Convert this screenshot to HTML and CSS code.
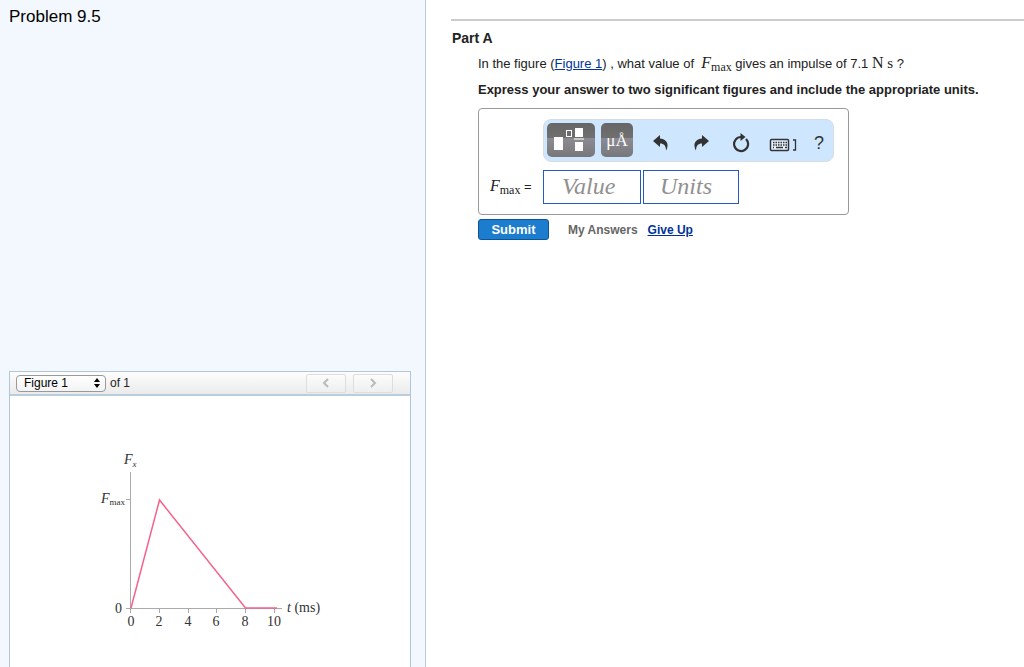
FILE: index.html
```html
<!DOCTYPE html>
<html lang="en">
<head>
	<meta charset="utf-8">
	<meta name="viewport" content="width=device-width, initial-scale=1.0">
	<title>Problem 9.5</title>
	<link rel="stylesheet" href="styles.css">
</head>
<body>
	<div class="page">
		<aside class="left">
			<h1 class="title">Problem 9.5</h1>

			<section class="figure">
				<div class="figbar">
					<span class="pick">
						<select id="fig" aria-label="Figure">
							<option>Figure 1</option>
						</select>
						<svg class="arrows" width="6" height="10" viewBox="0 0 6 10"><path d="M3 0L6 4H0zM3 10L0 6H6z"/></svg>
					</span>
					<label for="fig">of 1</label>
					<div class="pager">
						<button type="button" aria-label="Previous figure"><svg width="8" height="10" viewBox="0 0 8 10"><path d="M6 1L2 5L6 9"/></svg></button>
						<button type="button" aria-label="Next figure"><svg width="8" height="10" viewBox="0 0 8 10"><path d="M2 1L6 5L2 9"/></svg></button>
					</div>
				</div>
				<div class="figbody">
					<svg class="chart" width="250" height="200" viewBox="0 0 250 200">
						<!-- axes and ticks -->
						<path class="axis" d="M40.5 26V163M36 162.5H192M36 53.5H41M40.5 162V167M69.5 162V167M98.5 162V167M126.5 162V167M155.5 162V167M184.5 162V167"/>
						<path class="force" d="M41 162L69.500 54L155.500 162H187"/>
						<text x="34" y="18"><tspan class="it">F</tspan><tspan class="it small" dy="3">x</tspan></text>
						<text x="11" y="57"><tspan class="it">F</tspan><tspan class="small" dy="2">max</tspan></text>
						<text x="25" y="167">0</text>
						<text class="mid" x="41" y="180">0</text>
						<text class="mid" x="69" y="180">2</text>
						<text class="mid" x="98" y="180">4</text>
						<text class="mid" x="126" y="180">6</text>
						<text class="mid" x="155" y="180">8</text>
						<text class="mid" x="184" y="180">10</text>
						<text x="197" y="166"><tspan class="it">t</tspan> (ms)</text>
					</svg>
				</div>
			</section>
		</aside>

		<main class="right">
			<h2>Part A</h2>
			<div class="part">
				<p>In the figure (<a href="#fig">Figure 1</a>) , what value of &nbsp;<span class="math"><i>F</i><sub>max</sub></span> gives an impulse of 7.1 <span class="math">N<small>&nbsp;s</small></span> ?</p>
				<p class="bold">Express your answer to two significant figures and include the appropriate units.</p>

				<form onsubmit="event.preventDefault()" autocomplete="off">
					<div class="answer">
						<div class="toolbar">
							<button type="button" class="tile wide" aria-label="Templates">
								<svg width="48" height="34" viewBox="0 0 48 34">
									<rect x="7" y="14" width="9" height="13" fill="#fff"/>
									<rect x="19.500" y="7.500" width="5" height="6" fill="none" stroke="#fff"/>
									<rect x="28" y="5" width="8" height="9" fill="#fff"/>
									<rect x="27" y="15" width="10" height="2" fill="#c8c8cc"/>
									<rect x="28" y="19" width="8" height="9" fill="#fff"/>
								</svg>
							</button>
							<button type="button" class="tile">μÅ</button>
							<div class="tools">
								<button type="button" aria-label="Undo"><svg width="16" height="18" viewBox="0 0 16 18"><path d="M0 7L7 1V4.500C12 5 15 8 14.500 12C14.300 13.500 14 15 13 16.500C13 12 11 9.500 7 9.500V13Z"/></svg></button>
								<button type="button" aria-label="Redo"><svg width="16" height="18" viewBox="0 0 16 18"><path d="M16 7L9 1V4.500C4 5 1 8 1.500 12C1.700 13.500 2 15 3 16.500C3 12 5 9.500 9 9.500V13Z"/></svg></button>
								<button type="button" aria-label="Reset"><svg width="18" height="20" viewBox="0 0 18 20"><path d="M14 6A7 7 0 1 1 9 4" fill="none" stroke="#333" stroke-width="2.200"/><path d="M8.500 0L13.500 4L8.500 8Z"/></svg></button>
								<button type="button" class="keys" aria-label="Keyboard shortcuts"><svg width="28" height="14" viewBox="0 0 28 14">
									<rect x="1.500" y="1.500" width="18" height="11" rx="1" fill="#e4f1ff" stroke="#333" stroke-width="1.500"/>
									<path d="M4 4.500H18M4 7H18" fill="none" stroke="#333" stroke-width="1.300" stroke-dasharray="1.500 1"/>
									<path d="M4 9.500H5M7 9.500H14M16 9.500H18M24 2H26.500V12H24" fill="none" stroke="#333" stroke-width="1.300"/>
								</svg></button>
								<button type="button" class="help">?</button>
							</div>
						</div>
						<label for="value"><span class="math"><i>F</i><sub>max</sub></span> =</label>
						<div class="fields">
							<input type="text" id="value" placeholder="Value">
							<input type="text" class="units" aria-label="Units" placeholder="Units">
						</div>
					</div>
					<div class="actions">
						<button class="submit">Submit</button>
						<span class="mine">My Answers</span>
						<a href="#giveup">Give Up</a>
					</div>
				</form>
			</div>
		</main>
	</div>
</body>
</html>
```
FILE: styles.css
```css
* {
    box-sizing: border-box;
}
body {
    margin: 0;
    font-family: "Liberation Sans", Arial, sans-serif;
    font-size: 13px;
    color: #222;
    background-color: #fff;
}
button, input, select {
    font-family: inherit;
    margin: 0;
    padding: 0;
}
h1, h2, p {
    margin: 0;
}
a {
    color: #039;
}
.page {
    display: grid;
    grid-template-columns: 41.6% 1fr;
    min-height: 100vh;
}

/* left side */
.left {
    display: flex;
    flex-direction: column;
    justify-content: space-between;
    padding: 7px 14px 0 9px;
    background-color: #f3f8ff;
    border-right: 1px solid #b5cadc;
}
.title {
    font-size: 17px;
    font-weight: normal;
    line-height: 20px;
    color: #000;
}
.figure {
    border: 1px solid #b0c6d9;
    border-bottom: none;
    background-color: #fff;
}
.figbar {
    display: flex;
    align-items: center;
    gap: 4px;
    height: 24px;
    padding: 0 17px 0 6px;
    font-size: 12px;
    background: linear-gradient(#fdfdfd, #ebebeb);
    border-bottom: 2px solid #b9cddd;
}
.pick {
    display: flex;
    position: relative;
}
.pick select {
    appearance: none;
    width: 90px;
    height: 17px;
    padding-left: 7px;
    font-size: 12px;
    color: #000;
    background: linear-gradient(#fff, #f3f3f3);
    border: 1px solid #999;
    border-radius: 4px;
}
.arrows {
    position: absolute;
    right: 6px;
    top: 3px;
    pointer-events: none;
}
.pager {
    display: flex;
    gap: 7px;
    margin-left: auto;
}
.pager button {
    display: flex;
    align-items: center;
    justify-content: center;
    width: 40px;
    height: 19px;
    background: linear-gradient(#fcfcfc, #efefef);
    border: 1px solid #ddd;
    border-radius: 2px;
}
.pager path {
    fill: none;
    stroke: #bbb;
    stroke-width: 2;
}
.figbody {
    padding: 50px 20px 21px 80px;
}
.chart {
    display: block;
    font-family: "Liberation Serif", "Times New Roman", serif;
    font-size: 14px;
    fill: #333;
}
.chart .axis {
    fill: none;
    stroke: #aaa;
}
.chart .force {
    fill: none;
    stroke: #f4638a;
    stroke-width: 1.5;
}
.it {
    font-style: italic;
}
.small {
    font-size: 9px;
}
.mid {
    text-anchor: middle;
}

/* right side */
.right {
    margin: 19px 0 0 25px;
    padding: 4px 0 0 1px;
    border-top: 2px solid #ccc;
}
.right h2 {
    font-size: 14px;
    line-height: 26px;
}
.part {
    padding-left: 26px;
}
.part p {
    line-height: 26px;
}
.bold {
    font-weight: bold;
}
.math {
    font-family: "Liberation Serif", "Times New Roman", serif;
    font-size: 16px;
    line-height: 1;
}
.math small {
    font-size: 15px;
}
.math sub {
    font-size: 12px;
    line-height: 1;
    vertical-align: -3px;
}
.answer {
    display: grid;
    grid-template-columns: 53px auto;
    align-items: center;
    row-gap: 8px;
    width: fit-content;
    margin-top: 5px;
    padding: 10px 14px 10px 11px;
    border: 1px solid #999;
    border-radius: 4px;
}
.toolbar {
    grid-column: 2;
    display: flex;
    align-items: center;
    gap: 6px;
    height: 43px;
    padding: 0 0 0 3px;
    background-color: #cfe6ff;
    border: 1px solid #d8dde3;
    border-radius: 8px;
}
.toolbar button {
    display: flex;
    align-items: center;
    justify-content: center;
    height: 34px;
    background: none;
    border: none;
}
.toolbar .tile {
    width: 32px;
    margin-bottom: 2px;
    padding-top: 2px;
    font-family: "Liberation Serif", "Times New Roman", serif;
    font-size: 17px;
    color: #fff;
    background: linear-gradient(#666, #707070 45%, #8c8b93 45%, #77777b);
    border-radius: 5px;
}
.toolbar .wide {
    width: 48px;
    padding-top: 0;
}
.tools {
    display: flex;
    align-items: center;
    margin-left: 2px;
    padding-top: 5px;
}
.tools button {
    width: 40px;
}
.tools svg {
    fill: #333;
}
.tools .keys {
    width: 44px;
    padding-top: 4px;
}
.tools .help {
    width: 28px;
    font-size: 18px;
    color: #333;
}
.fields {
    display: flex;
    gap: 2px;
}
.fields input {
    width: 98px;
    height: 34px;
    padding: 0 0 2px 18px;
    font-family: "Liberation Serif", "Times New Roman", serif;
    font-size: 24px;
    font-style: italic;
    border: 1px solid #2659c3;
}
.fields .units {
    width: 96px;
    padding-left: 16px;
}
.fields input::placeholder {
    color: #909090;
}
.actions {
    display: flex;
    align-items: center;
    margin-top: 4px;
    font-size: 12px;
    font-weight: bold;
}
.submit {
    width: 71px;
    height: 21px;
    margin-right: 19px;
    font-size: 13px;
    font-weight: bold;
    color: #fff;
    background-color: #1c7ccd;
    border: 1px solid #0c5593;
    border-radius: 3px;
}
.mine {
    margin-right: 10px;
    color: #666;
}
```
